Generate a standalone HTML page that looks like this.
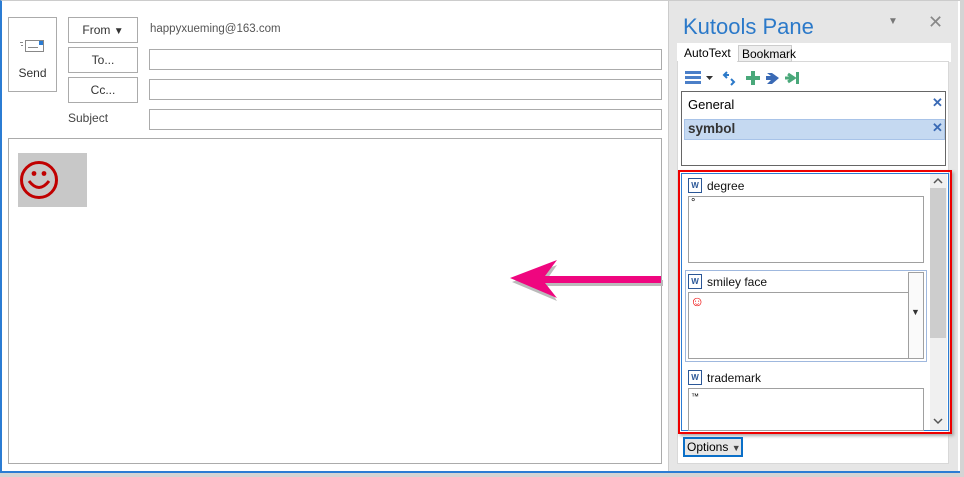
<!DOCTYPE html>
<html><head><meta charset="utf-8"><style>
*{box-sizing:border-box;margin:0;padding:0}
body{width:964px;height:477px;overflow:hidden;background:#d4d4d4;font-family:"Liberation Sans",sans-serif;position:relative}
.a{position:absolute}
.btn{position:absolute;border:1px solid #ababab;background:#fff;font-size:12px;color:#333;text-align:center}
.inp{position:absolute;border:1px solid #ababab;background:#fff}
.tb{position:absolute;border:1px solid #a0a0a0;background:#fff}
.lbl{position:absolute;font-size:12px;color:#111}
.w{position:absolute;width:14px;height:15px;border:1px solid #2b5797;background:#fff;font-size:8px;font-weight:bold;color:#2b5797;text-align:center;line-height:13px}
</style></head><body>
<div class="a" style="left:0;top:0;width:960px;height:473px;background:#fff;border-left:2px solid #2b7cd3;border-top:1px solid #ccc;border-bottom:2px solid #2b7cd3"></div>
<div class="btn" style="left:8px;top:17px;width:49px;height:75px">
<svg width="26" height="14" style="position:absolute;left:10px;top:21px"><g stroke="#888" fill="none"><rect x="6.5" y="1.5" width="18" height="11"/><line x1="9" y1="8.5" x2="19" y2="8.5"/><line x1="1" y1="3.5" x2="4" y2="3.5"/><line x1="2" y1="6.5" x2="4" y2="6.5"/></g><rect x="20" y="2" width="4" height="4" fill="#2b7cd3"/></svg>
<div style="position:absolute;top:48px;width:100%;font-size:12px">Send</div></div>
<div class="btn" style="left:68px;top:17px;width:70px;height:26px;line-height:24px">From <span style="font-size:10px">▼</span></div>
<div class="a" style="left:150px;top:23px;font-size:11.5px;color:#555">happyxueming@163.com</div>
<div class="btn" style="left:68px;top:47px;width:70px;height:26px;line-height:24px">To...</div>
<div class="btn" style="left:68px;top:77px;width:70px;height:26px;line-height:24px">Cc...</div>
<div class="a" style="left:68px;top:111px;font-size:12px;color:#444">Subject</div>
<div class="inp" style="left:149px;top:49px;width:513px;height:21px"></div>
<div class="inp" style="left:149px;top:79px;width:513px;height:21px"></div>
<div class="inp" style="left:149px;top:109px;width:513px;height:21px"></div>
<div class="inp" style="left:8px;top:138px;width:654px;height:326px"></div>
<div class="a" style="left:18px;top:153px;width:69px;height:54px;background:#c8c8c8">
<svg width="42" height="42" style="position:absolute;left:1px;top:7px"><g stroke="#c00000" stroke-width="3" fill="none"><circle cx="20" cy="20" r="17.5"/><path d="M10 21 Q20 34 30 21"/></g><circle cx="15" cy="13.5" r="2.4" fill="#c00000"/><circle cx="25" cy="13.5" r="2.4" fill="#c00000"/></svg></div>
<svg class="a" style="left:505px;top:258px" width="165" height="45"><path d="M5 21 L50 4 L38 21 L50 40 Z" fill="#bbb" transform="translate(2,3)"/><rect x="40" y="22" width="118" height="6" fill="#bbb"/><path d="M5 20 L52 2 L40 18 L156 18 L156 25 L40 25 L52 40 Z" fill="#ef067f"/></svg>
<div class="a" style="left:668px;top:1px;width:290px;height:470px;background:#e6e6e6;border-left:1px solid #ccc"></div>
<div class="a" style="left:683px;top:14px;font-size:22px;color:#2b79c9">Kutools Pane</div>
<div class="a" style="left:888px;top:16px;font-size:10px;color:#777">▼</div>
<div class="a" style="left:928px;top:12px;font-size:18px;color:#888">✕</div>
<div class="a" style="left:677px;top:43px;width:274px;height:19px;background:#fff"></div>
<div class="a" style="left:677px;top:61px;width:272px;height:403px;background:#fff;border:1px solid #d8d8d8"></div>
<div class="a" style="left:678px;top:43px;width:59px;height:20px;background:#fff;font-size:12px;padding:3px 0 0 6px">AutoText</div>
<div class="a" style="left:738px;top:45px;width:54px;height:17px;background:#eee;border:1px solid #ccc;font-size:12px;padding:1px 0 0 3px">Bookmark</div>
<svg class="a" style="left:684px;top:69px" width="125" height="18"><g fill="#4b7fc8"><rect x="1" y="2" width="16" height="3"/><rect x="1" y="7" width="16" height="3"/><rect x="1" y="12" width="16" height="3"/></g><path d="M22 7h7l-3.5 4z" fill="#333"/><path d="M43 3l-3 3 3 3M40 6h5M47 16l3-3-3-3" stroke="#2b79c9" stroke-width="2" fill="none"/><path d="M67 2h4v5h5v4h-5v5h-4v-5h-5V7h5z" fill="#4aa87a"/><path d="M83 4h5l7 5-7 6h-5l4-4h-5V7h5z" fill="#3a6ab5"/><path d="M104 5l6 4-6 4M101 9h9" stroke="#4aa87a" stroke-width="3" fill="none"/><rect x="112" y="3" width="3" height="12" fill="#4aa87a"/></svg>
<div class="a" style="left:681px;top:91px;width:265px;height:75px;border:1px solid #666;background:#fff"></div>
<div class="a" style="left:688px;top:97px;font-size:13px">General</div>
<div class="a" style="left:932px;top:95px;font-size:13px;color:#3a6ab5;font-weight:bold">✕</div>
<div class="a" style="left:684px;top:119px;width:261px;height:21px;background:#c5d9f1;border:1px solid #a8c3e8"></div>
<div class="a" style="left:688px;top:121px;font-size:13.5px;font-weight:bold;color:#333">symbol</div>
<div class="a" style="left:932px;top:120px;font-size:13px;color:#3a6ab5;font-weight:bold">✕</div>
<div class="a" style="left:678px;top:170px;width:274px;height:264px;border:2px solid #ee0000;box-shadow:2px 2px 3px #aaa"></div>
<div class="a" style="left:681px;top:173px;width:268px;height:258px;border:1px solid #2b7cd3"></div>
<div class="a" style="left:930px;top:174px;width:17px;height:256px;background:#f0f0f0"></div>
<div class="a" style="left:930px;top:188px;width:16px;height:150px;background:#cdcdcd"></div>
<svg class="a" style="left:932px;top:177px" width="12" height="8"><path d="M2 6l4-4 4 4" stroke="#555" stroke-width="1.5" fill="none"/></svg>
<svg class="a" style="left:932px;top:417px" width="12" height="8"><path d="M2 2l4 4 4-4" stroke="#555" stroke-width="1.5" fill="none"/></svg>
<div class="w" style="left:688px;top:178px">W</div>
<div class="lbl" style="left:707px;top:179px">degree</div>
<div class="tb" style="left:688px;top:196px;width:236px;height:67px"><span style="font-size:11px;position:absolute;left:2px;top:0">°</span></div>
<div class="a" style="left:685px;top:270px;width:242px;height:92px;border:1px solid #9fb8de"></div>
<div class="w" style="left:688px;top:274px">W</div>
<div class="lbl" style="left:707px;top:275px">smiley face</div>
<div class="tb" style="left:688px;top:292px;width:221px;height:67px"><span style="font-size:14px;color:#e00;position:absolute;left:1px;top:0">☺</span></div>
<div class="tb" style="left:908px;top:272px;width:16px;height:87px;background:#fafafa"><span style="position:absolute;left:2px;top:34px;font-size:9px;color:#333">▼</span></div>
<div class="w" style="left:688px;top:370px">W</div>
<div class="lbl" style="left:707px;top:371px">trademark</div>
<div class="tb" style="left:688px;top:388px;width:236px;height:43px"><span style="font-size:8px;position:absolute;left:2px;top:3px">™</span></div>
<div class="a" style="left:683px;top:437px;width:60px;height:20px;border:2px solid #0a6fc8;background:#e6e6e6;font-size:12px;padding:1px 0 0 2px">Options <span style="font-size:9px;color:#444">▼</span></div>
</body></html>
